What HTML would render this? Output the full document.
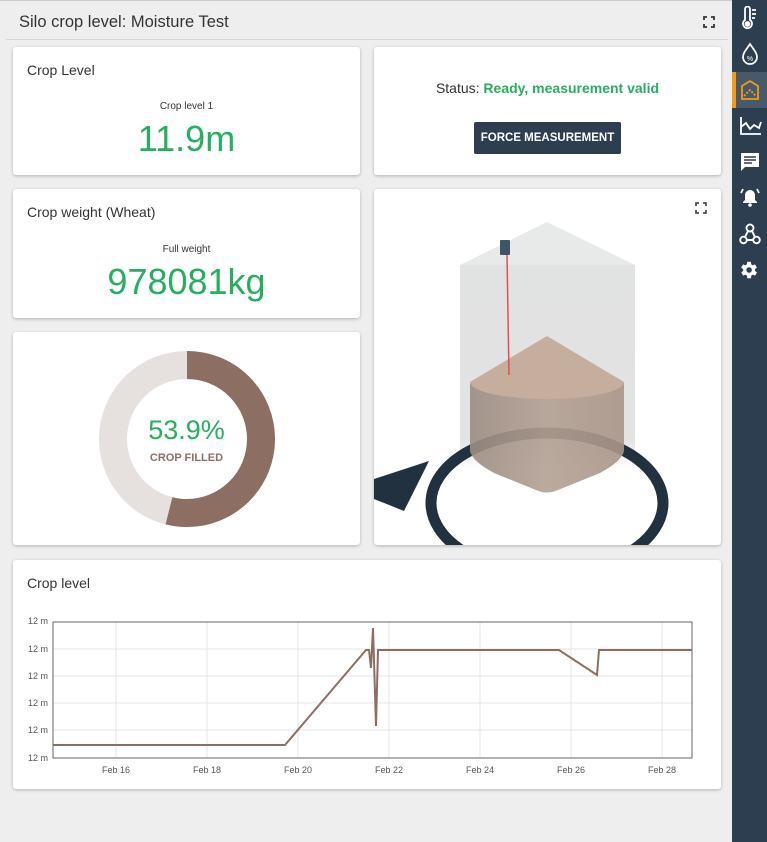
<!DOCTYPE html>
<html><head><style>
*{box-sizing:border-box;margin:0;padding:0}
body{width:767px;height:842px;background:#eeeeee;font-family:"Liberation Sans",Roboto,sans-serif;position:relative;overflow:hidden;color:#333}
.card{position:absolute;background:#fff;border-radius:3px;box-shadow:0 1px 3px rgba(0,0,0,.25)}
.title{position:absolute;left:14px;top:15px;font-size:14px;color:#333}
.green{color:#27ae60}
#side{position:absolute;left:732px;top:0;width:35px;height:842px;background:#2c3e50}
#side svg{position:absolute;left:7px}
</style></head><body>
<div style="position:absolute;left:0;top:0;width:732px;height:1px;background:#ccc"></div>
<div style="position:absolute;left:19px;top:13px;font-size:16.5px;color:#333">Silo crop level: Moisture Test</div>
<svg style="position:absolute;left:703px;top:16px" width="12" height="12" viewBox="0 0 12 12" fill="none" stroke="#333" stroke-width="1.8"><path d="M1 4V1h3M8 1h3v3M11 8v3H8M4 11H1V8"/></svg>
<div style="position:absolute;left:6px;top:39px;width:722px;height:1px;background:#d6d6d6"></div>

<div class="card" style="left:13px;top:47px;width:347px;height:128px">
<div class="title">Crop Level</div>
<div style="position:absolute;left:0;right:0;top:54px;text-align:center;font-size:10px">Crop level 1</div>
<div class="green" style="position:absolute;left:0;right:0;top:71px;text-align:center;font-size:36px">11.9m</div>
</div>
<div class="card" style="left:374px;top:47px;width:347px;height:128px">
<div style="position:absolute;left:0;right:0;top:33px;text-align:center;font-size:14px">Status: <b class="green">Ready, measurement valid</b></div>
<div style="position:absolute;left:100px;top:75px;width:147px;height:32px;background:#2c3e50;color:#fff;font-size:11.5px;font-weight:bold;text-align:center;line-height:32px;border-radius:2px">FORCE MEASUREMENT</div>
</div>
<div class="card" style="left:13px;top:189px;width:347px;height:129px">
<div class="title">Crop weight (Wheat)</div>
<div style="position:absolute;left:0;right:0;top:55px;text-align:center;font-size:10px">Full weight</div>
<div class="green" style="position:absolute;left:0;right:0;top:72px;text-align:center;font-size:36px">978081kg</div>
</div>
<div class="card" style="left:13px;top:332px;width:347px;height:213px">
<svg style="position:absolute;left:85px;top:18px" width="178" height="178" viewBox="0 0 178 178">
<circle cx="89" cy="89" r="74" fill="none" stroke="#e6e1de" stroke-width="28"/>
<circle cx="89" cy="89" r="74" fill="none" stroke="#8d6e63" stroke-width="28" stroke-dasharray="250.6 500" transform="rotate(-90 89 89)"/>
</svg>
<div class="green" style="position:absolute;left:0;right:0;top:83px;text-align:center;font-size:27px">53.9%</div>
<div style="position:absolute;left:0;right:0;top:120px;text-align:center;font-size:11px;font-weight:bold;color:#8d6e63">CROP FILLED</div>
</div>
<div class="card" style="left:374px;top:189px;width:347px;height:356px;overflow:hidden">
<svg width="347" height="356" viewBox="0 0 347 356">
<defs><linearGradient id="g" x1="0" x2="1"><stop offset="0" stop-color="#9c8c82"/><stop offset=".5" stop-color="#b3a093"/><stop offset="1" stop-color="#a99488"/></linearGradient>
<linearGradient id="b" x1="0" y1="0" x2="0" y2="1"><stop offset="0" stop-color="#e1e2e2"/><stop offset=".85" stop-color="#e3e3e3"/><stop offset="1" stop-color="#fff"/></linearGradient></defs>
<path d="M86 76L173 33L261 76Z" fill="#e8e9e9"/>
<rect x="86" y="76" width="175" height="205" fill="url(#b)"/>
<ellipse cx="173" cy="314" rx="116" ry="70" fill="none" stroke="#22313f" stroke-width="11"/>
<path d="M96 193V262Q98 272 120 284L162 301Q173 306 184 301L226 284Q248 272 250 262V193Z" fill="url(#g)" opacity=".9"/>
<path d="M96 193L173 147L250 193A77 17 0 0 1 96 193Z" fill="#c6ae9e"/>
<line x1="133" y1="66" x2="135" y2="186" stroke="#e05050" stroke-width="1.5"/>
<rect x="126" y="51" width="10" height="15" rx="1" fill="#3f5566"/>
<path d="M0 290L55 272L30 322L0 310Z" fill="#22313f"/>
<path d="M322 17v-3h3M329 14h3v3M332 21v3h-3M325 24h-3v-3" fill="none" stroke="#333" stroke-width="1.5"/>
</svg>
</div>

<div class="card" style="left:13px;top:560px;width:708px;height:229px">
<div class="title">Crop level</div>
</div>
<svg style="position:absolute;left:0;top:600px" width="731" height="180" viewBox="0 600 731 180" font-family="Liberation Sans,sans-serif" font-size="9" fill="#555">
<g stroke="#e4e4e4" stroke-width="1">
<path d="M53 649H692M53 676H692M53 703H692M53 730H692"/>
<path d="M116 622V758M207 622V758M298 622V758M389 622V758M480 622V758M571 622V758M662 622V758"/>
</g>
<rect x="53" y="622" width="639" height="136" fill="none" stroke="#666"/>
<g text-anchor="end"><text x="48" y="624">12 m</text><text x="48" y="652">12 m</text><text x="48" y="679">12 m</text><text x="48" y="706">12 m</text><text x="48" y="733">12 m</text><text x="48" y="761">12 m</text></g>
<g text-anchor="middle"><text x="116" y="773">Feb 16</text><text x="207" y="773">Feb 18</text><text x="298" y="773">Feb 20</text><text x="389" y="773">Feb 22</text><text x="480" y="773">Feb 24</text><text x="571" y="773">Feb 26</text><text x="662" y="773">Feb 28</text></g>
<polyline fill="none" stroke="#8d6e63" stroke-width="2" points="53,745 285,745 366,650 369,650 371,668 373,628 376,726 378,650 559,650 597,675 599,650 692,650"/>
</svg>

<div id="side">
<div style="position:absolute;left:0;top:72px;width:35px;height:36px;background:#47596b"></div>
<div style="position:absolute;left:0;top:72px;width:4px;height:36px;background:#f39c12"></div>
<svg style="top:6px" width="22" height="24" viewBox="0 0 22 24" fill="none" stroke="#fff" stroke-width="1.8"><path d="M6 3a2.5 2.5 0 015 0v11a4.5 4.5 0 11-5 0Z"/><circle cx="8.5" cy="18" r="2" fill="#fff"/><path d="M13 4h4M13 8h4M13 12h3"/></svg>
<svg style="top:42px" width="22" height="24" viewBox="0 0 22 24" fill="none" stroke="#fff" stroke-width="1.8"><path d="M11 2C7 8 4 11 4 15a7 7 0 0014 0c0-4-3-7-7-13Z"/><text x="11" y="19" font-size="7" fill="#fff" stroke="none" text-anchor="middle" font-family="Liberation Sans">%</text></svg>
<svg style="top:78px" width="22" height="24" viewBox="0 0 22 24" fill="none" stroke="#f39c12" stroke-width="1.8"><path d="M3 8L11 3L19 8V21H3Z"/><path d="M5 18L11 12L17 18" stroke-dasharray="2 1.5"/></svg>
<svg style="top:114px" width="24" height="24" viewBox="0 0 24 24" fill="none" stroke="#fff" stroke-width="1.8"><path d="M2 3V20H22M2 13L7 9L11 15L15 11L20 14L22 8"/></svg>
<svg style="top:150px" width="22" height="24" viewBox="0 0 22 24"><path d="M2 3H20V17H6L2 21Z" fill="#fff"/><path d="M5 7H17M5 10H17M5 13H13" stroke="#2c3e50" stroke-width="1.6"/></svg>
<svg style="top:185px" width="22" height="24" viewBox="0 0 22 24"><path d="M11 5a5 5 0 015 5v5l2 2v1H4v-1l2-2v-5a5 5 0 015-5Z" fill="#fff"/><circle cx="11" cy="20" r="1.8" fill="#fff"/><path d="M4 4L2 8M18 4L20 8" stroke="#fff" stroke-width="1.8"/></svg>
<svg style="top:222px" width="22" height="24" viewBox="0 0 22 24" fill="none" stroke="#fff" stroke-width="1.9"><circle cx="11" cy="6" r="3.5"/><circle cx="4.5" cy="18" r="3.3"/><circle cx="17.5" cy="18" r="3.3"/><path d="M9 9L6 15M13 9L16 15M8 18H14"/></svg>
<svg style="top:258px" width="22" height="24" viewBox="0 0 24 24"><path fill="#fff" d="M19.4 13a7.5 7.5 0 000-2l2.1-1.6-2-3.5-2.5 1a7 7 0 00-1.7-1L15 3h-4l-.4 2.9a7 7 0 00-1.7 1l-2.5-1-2 3.5L6.6 11a7.5 7.5 0 000 2l-2.1 1.6 2 3.5 2.5-1a7 7 0 001.7 1L11 21h4l.4-2.9a7 7 0 001.7-1l2.5 1 2-3.5Z" transform="translate(-2 0)"/><circle cx="11" cy="12" r="3" fill="#2c3e50"/></svg>
</div>
</body></html>
